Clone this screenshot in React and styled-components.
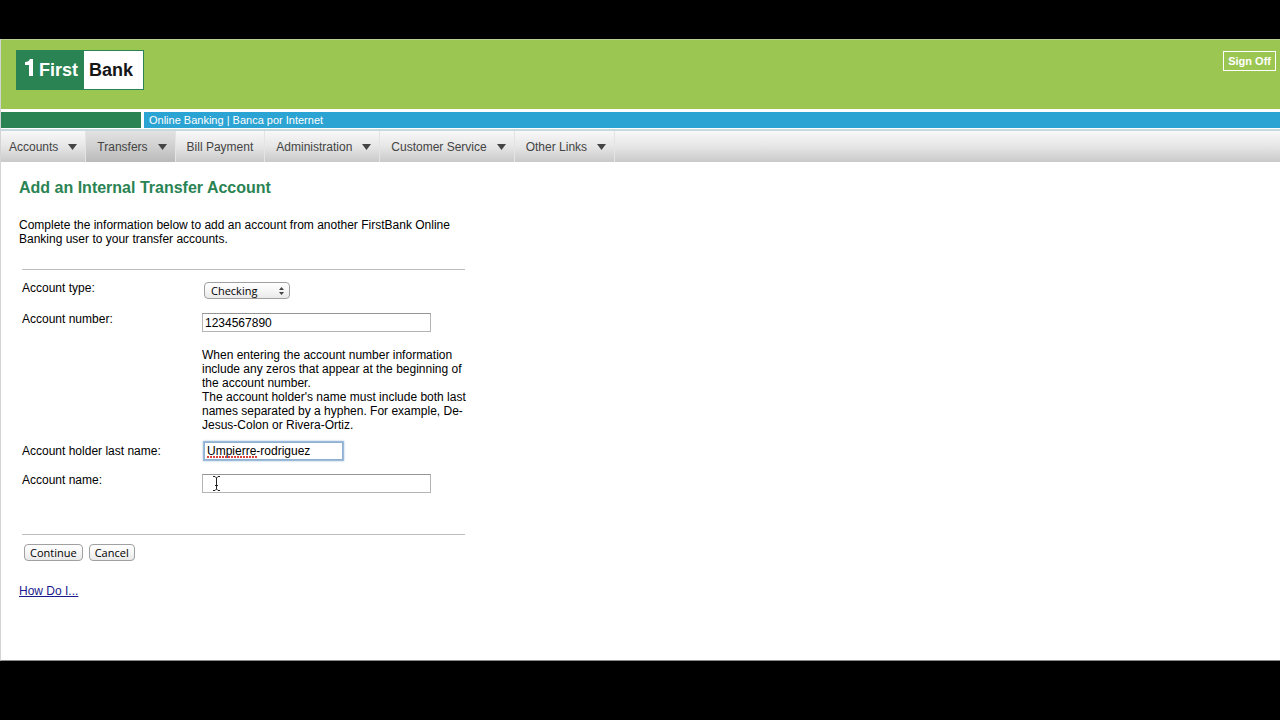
import { useState } from "react";
import styled, { createGlobalStyle, css } from "styled-components";

const GlobalStyle = createGlobalStyle`
  * {
    box-sizing: border-box;
  }

  body {
    margin: 0;
    background: #000;
    color: #000;
    font-family: "Liberation Sans", Arial, Helvetica, sans-serif;
    font-size: 12px;
    line-height: 14px;
  }
`;

const Screen = styled.div`
  display: flex;
  flex-direction: column;
  min-height: 100vh;
  padding: 39px 0 59px;
`;

const Page = styled.div`
  flex: 1;
  background: #fff;
  border-left: 1px solid #d4d4d4;
  border-bottom: 1px solid #8a8a8a;
`;

const Header = styled.header`
  display: flex;
  justify-content: space-between;
  align-items: flex-start;
  height: 70px;
  padding: 10px 4px 0 15px;
  background: #9bc651;
  border-top: 1px solid #b9cf93;
`;

const Logo = styled.div`
  display: flex;
  width: 128px;
  height: 40px;
  border: 1px solid #2a8353;
  background: #fff;
  font-size: 18px;
  line-height: 38px;
  font-weight: bold;
`;

const LogoFirst = styled.span`
  display: flex;
  align-items: baseline;
  gap: 5px;
  width: 67px;
  padding-left: 8px;
  background: #2a8353;
  color: #fff;
`;

const LogoBank = styled.span`
  padding-left: 5px;
  color: #161616;
`;

const SignOff = styled.button`
  height: 20px;
  margin-top: 1px;
  padding: 0 4px;
  border: 1px solid #fff;
  background: none;
  color: #fff;
  font-family: inherit;
  font-size: 11px;
  font-weight: bold;
`;

const Strip = styled.div`
  display: flex;
  gap: 3px;
  padding: 3px 0 1px;
  border-bottom: 2px solid #c9dade;
`;

const StripBlock = styled.div`
  width: 140px;
  background: #2a8353;
`;

const StripTitle = styled.div`
  flex: 1;
  padding-left: 5px;
  background: #2ba3d3;
  color: #fff;
  font-size: 11px;
  line-height: 16px;
`;

const Nav = styled.nav`
  display: flex;
  height: 31px;
  background: linear-gradient(#f8f8f8, #e6e6e6 50%, #c9c9c9);
`;

const NavItem = styled.button`
  display: flex;
  align-items: center;
  gap: 10px;
  padding: 0 ${(p) => (p.$menu ? 8 : 11)}px 0 11px;
  border: 0;
  border-right: 1px solid #e4e4e4;
  background: none;
  color: #444;
  font-family: inherit;
  font-size: 12px;

  &:first-child {
    padding-left: 8px;
  }

  ${(p) =>
    p.$active &&
    css`
      background: linear-gradient(#e2e2e2, #d0d0d0 50%, #bababa);
    `}
`;

const Arrow = styled.svg`
  width: 9px;
  height: 6px;
  fill: #444;
`;

const Main = styled.main`
  padding: 19px 18px 20px;
`;

const Title = styled.h1`
  margin: 0;
  color: #2a8353;
  font-size: 16px;
  line-height: 14px;
`;

const Intro = styled.p`
  max-width: 440px;
  margin: 23px 0;
`;

const Form = styled.form`
  max-width: 446px;
  padding-left: 3px;
`;

const Fields = styled.div`
  display: grid;
  grid-template-columns: 180px 1fr;
  padding: 11px 0 41px;
  border-top: 1px solid #bcbcbc;
  border-bottom: 1px solid #bcbcbc;
`;

const Label = styled.label`
  grid-column: 1;
  padding-top: ${(p) => (p.$level ? 2 : 0)}px;
`;

const Cell = styled.div`
  grid-column: 2;
  padding-bottom: ${(p) => p.$space || 0}px;
`;

const mac = css`
  border: 1px solid #a0a0a0;
  border-radius: 4px;
  background: linear-gradient(#fff, #f6f6f6 50%, #e9e9e9);
  color: #000;
  font-family: "Open Sans", "Noto Sans", sans-serif;
  font-size: 11px;
  line-height: 14px;
`;

const SelectWrap = styled.div`
  position: relative;
  width: 86px;
  margin-left: 2px;
  padding-top: 1px;

  svg {
    position: absolute;
    right: 6px;
    top: 6px;
    width: 5px;
    height: 8px;
    fill: #444;
    pointer-events: none;
  }
`;

const Select = styled.select`
  ${mac}
  display: block;
  appearance: none;
  width: 100%;
  height: 17px;
  padding: 0 6px;
`;

const TextInput = styled.input`
  display: block;
  width: 229px;
  height: 19px;
  margin-top: 1px;
  padding: 0 2px;
  border: 1px solid #b4b4b4;
  border-top-color: #959595;
  outline: 0;
  background: #fff;
  color: #000;
  font-family: inherit;
  font-size: 12px;

  ${(p) =>
    p.$focused &&
    css`
      width: 139px;
      height: 18px;
      margin: 0 0 0 2px;
      border-color: #8fb1d3;
      box-shadow: 0 0 0 1px #9dbbd9, 0 0 2px 1px #a9c3dd;
    `}
`;

const Help = styled.p`
  width: 270px;
  margin: 0;
`;

const Spelling = styled.div`
  position: relative;

  svg {
    position: absolute;
    left: 5px;
    top: 14px;
    width: 50px;
    height: 2px;
    pointer-events: none;
  }
`;

const Pointer = styled.div`
  position: relative;

  svg {
    position: absolute;
    left: 11px;
    top: 2px;
    width: 7px;
    height: 15px;
    fill: none;
    stroke: #222;
    pointer-events: none;
  }
`;

const Actions = styled.div`
  display: flex;
  gap: 6px;
  padding: 9px 2px 23px;
`;

const Button = styled.button`
  ${mac}
  height: 17px;
  padding: 0 5px;
`;

const HelpLink = styled.a`
  color: #1a1a8c;
`;

const MENU = [
  { label: "Accounts", menu: true },
  { label: "Transfers", menu: true, active: true },
  { label: "Bill Payment" },
  { label: "Administration", menu: true },
  { label: "Customer Service", menu: true },
  { label: "Other Links", menu: true },
];

export default function App() {
  const [number, setNumber] = useState("1234567890");
  const [lastName, setLastName] = useState("Umpierre-rodriguez");
  const [name, setName] = useState("");

  return (
    <Screen>
      <GlobalStyle />
      <Page>
        <Header>
          <Logo>
            <LogoFirst>
              <svg width="9" height="17" viewBox="0 0 9 17" fill="#fff" aria-hidden="true">
                <path d="M5 0h3v17H4V6H0V3c3 0 4-1 5-3z" />
              </svg>
              First
            </LogoFirst>
            <LogoBank>Bank</LogoBank>
          </Logo>
          <SignOff>Sign Off</SignOff>
        </Header>
        <Strip>
          <StripBlock />
          <StripTitle>Online Banking | Banca por Internet</StripTitle>
        </Strip>
        <Nav>
          {MENU.map((item) => (
            <NavItem key={item.label} $active={item.active} $menu={item.menu}>
              {item.label}
              {item.menu && (
                <Arrow viewBox="0 0 9 6">
                  <path d="M0 0h9L4.500 6z" />
                </Arrow>
              )}
            </NavItem>
          ))}
        </Nav>

        <Main>
          <Title>Add an Internal Transfer Account</Title>
          <Intro>
            Complete the information below to add an account from another FirstBank Online
            Banking user to your transfer accounts.
          </Intro>

          <Form onSubmit={(e) => e.preventDefault()}>
            <Fields>
              <Label htmlFor="type">Account type:</Label>
              <Cell $space={13}>
                <SelectWrap>
                  <Select id="type" defaultValue="Checking">
                    <option>Checking</option>
                    <option>Savings</option>
                  </Select>
                  <svg viewBox="0 0 5 8">
                    <path d="M0 3L2.500 0L5 3zM0 5h5L2.500 8z" />
                  </svg>
                </SelectWrap>
              </Cell>

              <Label htmlFor="number">Account number:</Label>
              <Cell $space={16}>
                <TextInput id="number" value={number} onChange={(e) => setNumber(e.target.value)} />
              </Cell>

              <Cell $space={10}>
                <Help>
                  When entering the account number information include any zeros that appear at
                  the beginning of the account number.
                </Help>
                <Help>
                  The account holder's name must include both last names separated by a hyphen.
                  For example, De-Jesus-Colon or Rivera-Ortiz.
                </Help>
              </Cell>

              <Label htmlFor="lastName" $level>Account holder last name:</Label>
              <Cell $space={13}>
                <Spelling>
                  <TextInput
                    id="lastName"
                    $focused
                    spellCheck={false}
                    value={lastName}
                    onChange={(e) => setLastName(e.target.value)}
                  />
                  <svg viewBox="0 0 50 2">
                    <path d="M0 1h50" stroke="#d8433b" strokeWidth="2" strokeDasharray="2 1" />
                  </svg>
                </Spelling>
              </Cell>

              <Label htmlFor="name">Account name:</Label>
              <Cell>
                <Pointer>
                  <TextInput id="name" value={name} onChange={(e) => setName(e.target.value)} />
                  <svg viewBox="0 0 7 15">
                    <path d="M0 .5h2L3.500 2L5 .5h2M3.500 2v11M0 14.500h2L3.500 13L5 14.500h2M2 9.500h3" />
                  </svg>
                </Pointer>
              </Cell>
            </Fields>

            <Actions>
              <Button type="submit">Continue</Button>
              <Button type="button">Cancel</Button>
            </Actions>
          </Form>

          <HelpLink href="#help">How Do I...</HelpLink>
        </Main>
      </Page>
    </Screen>
  );
}
